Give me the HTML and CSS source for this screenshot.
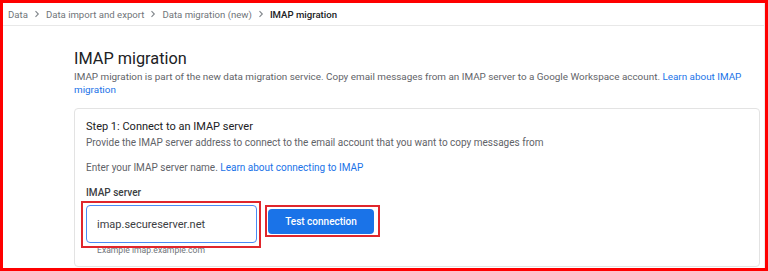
FILE: index.html
```html
<!DOCTYPE html>
<html lang="en">
<head>
<meta charset="utf-8">
<title>IMAP migration</title>
<link rel="stylesheet" href="styles.css">
</head>
<body>
<div class="frame">
  <div class="inner">
    <nav class="crumbs">
      <span class="crumb">Data</span>
      <svg class="chev" viewBox="0 0 8 8" width="8" height="8"><path d="M2.5 1.2 L5.3 4 L2.5 6.8" fill="none" stroke="#80868b" stroke-width="1.1"/></svg>
      <span class="crumb">Data import and export</span>
      <svg class="chev" viewBox="0 0 8 8" width="8" height="8"><path d="M2.5 1.2 L5.3 4 L2.5 6.8" fill="none" stroke="#80868b" stroke-width="1.1"/></svg>
      <span class="crumb">Data migration (new)</span>
      <svg class="chev" viewBox="0 0 8 8" width="8" height="8"><path d="M2.5 1.2 L5.3 4 L2.5 6.8" fill="none" stroke="#80868b" stroke-width="1.1"/></svg>
      <span class="crumb current">IMAP migration</span>
    </nav>
    <main class="page">
      <h1 class="title">IMAP migration</h1>
      <p class="desc">IMAP migration is part of the new data migration service. Copy email messages from an IMAP server to a Google Workspace account. <a class="link" href="#">Learn about IMAP migration</a></p>
      <section class="card">
        <h2 class="step">Step 1: Connect to an IMAP server</h2>
        <p class="hint">Provide the IMAP server address to connect to the email account that you want to copy messages from</p>
        <p class="hint enter">Enter your IMAP server name. <a class="link" href="#">Learn about connecting to IMAP</a></p>
        <div class="label">IMAP server</div>
        <div class="row">
          <div class="input">imap.secureserver.net</div>
          <button class="btn" type="button">Test connection</button>
        </div>
        <div class="example">Example imap.example.com</div>
      </section>
    </main>
  </div>
</div>
</body>
</html>
```
FILE: styles.css
```css
html, body {
  margin: 0;
  padding: 0;
  background: #ffffff;
}
body {
  font-family: Roboto, "Liberation Sans", Arial, sans-serif;
  color: #202124;
}
.frame {
  width: 768px;
  height: 271px;
  box-sizing: border-box;
  border: 3px solid #fe0000;
  overflow: hidden;
}
.inner {
  height: 100%;
  border-right: 1px solid #ececec;
}
.crumbs {
  height: 22px;
  border-bottom: 1px solid #e8e8e8;
  display: flex;
  align-items: center;
  padding-left: 5px;
  font-size: 9.6px;
  color: #70757a;
}
.chev {
  margin: 0 5px;
  display: block;
}
.crumb.current {
  color: #202124;
  font-weight: 500;
}
.page {
  padding: 0 4px 0 71px;
}
.title {
  margin: 23px 0 0;
  font-size: 16.3px;
  line-height: 20px;
  font-weight: 400;
  color: #202124;
}
.desc {
  margin: 1px 0 0;
  font-size: 9.9px;
  line-height: 13px;
  color: #5f6368;
}
.link {
  color: #1a73e8;
  text-decoration: none;
}
.card {
  margin-top: 12px;
  border: 1px solid #e3e3e3;
  border-radius: 4px;
  padding: 10px 11px 10px 11px;
}
.step {
  margin: 0;
  font-size: 11px;
  line-height: 16px;
  font-weight: 400;
  color: #202124;
}
.hint {
  margin: 1px 0 0;
  font-size: 10px;
  line-height: 13px;
  color: #5f6368;
}
.hint.enter {
  margin-top: 12px;
}
.label {
  margin-top: 12px;
  font-size: 10px;
  line-height: 13px;
  font-weight: 500;
  color: #3c4043;
}
.row {
  margin-top: 6px;
  display: flex;
  align-items: flex-start;
  gap: 11px;
}
.input {
  position: relative;
  width: 171px;
  height: 38px;
  box-sizing: border-box;
  border: 1px solid #4a8af4;
  border-radius: 4px;
  padding-left: 10px;
  display: flex;
  align-items: center;
  font-size: 11px;
  color: #3c4043;
}
.input::after {
  content: "";
  position: absolute;
  top: -5px;
  left: -6px;
  right: -5px;
  bottom: -6px;
  border: 2px solid #e0262c;
  pointer-events: none;
}
.btn {
  position: relative;
  margin-top: 4px;
  width: 106px;
  height: 25px;
  border: none;
  border-radius: 4px;
  background: #1a73e8;
  color: #ffffff;
  font-family: Roboto, "Liberation Sans", Arial, sans-serif;
  font-size: 10px;
  font-weight: 500;
  padding: 0;
}
.btn::after {
  content: "";
  position: absolute;
  top: -4px;
  left: -3px;
  right: -6px;
  bottom: -3px;
  border: 2px solid #e0262c;
  pointer-events: none;
}
.example {
  margin-top: 2px;
  padding-left: 11px;
  font-size: 8.6px;
  line-height: 11px;
  color: #70757a;
}
```
